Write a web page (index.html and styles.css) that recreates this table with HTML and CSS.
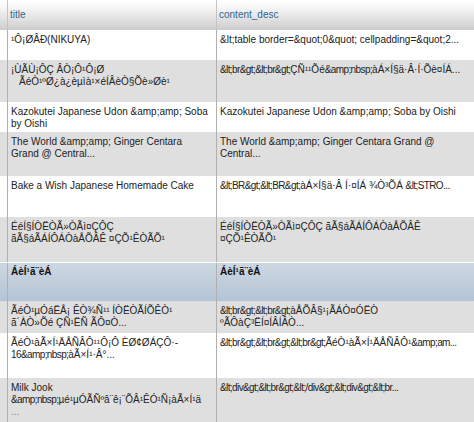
FILE: index.html
```
<!DOCTYPE html>
<html>
<head>
<meta charset="utf-8">
<link rel="stylesheet" href="styles.css">
</head>
<body>
<div class="tbl">
  <div class="row head">
    <div class="c0"></div>
    <div class="c1"><span class="lnk">title</span></div>
    <div class="c2"><span class="lnk">content_desc</span></div>
  </div>
  <div class="row odd h30">
    <div class="c0"></div>
    <div class="c1">¹Ô¡ØÂÐ(NIKUYA)</div>
    <div class="c2">&amp;lt;table border=&amp;quot;0&amp;quot; cellpadding=&amp;quot;2...</div>
  </div>
  <div class="row even h42">
    <div class="c0"></div>
    <div class="c1">¡ÙÃÙ¡ÔÇ ÂÒ¡Ô¹Ô¡Ø<br><span class="indent">ÃéÒ¹ºØ¿à¿èµìà¹×éÍÂèÒ§Õè»Øè¹</span></div>
    <div class="c2"><span class="ent">&amp;lt;br&amp;gt;&amp;lt;br&amp;gt;</span>ÇÑ¹¹Õé<span class="ent">&amp;amp;nbsp;</span>àÁ×Í§ä·Â·Í·Õè¤ÍÁ...</div>
  </div>
  <div class="row odd h30">
    <div class="c0"></div>
    <div class="c1">Kazokutei Japanese Udon &amp;amp;amp; Soba<br>by Oishi</div>
    <div class="c2">Kazokutei Japanese Udon &amp;amp;amp; Soba by Oishi</div>
  </div>
  <div class="row even h44">
    <div class="c0"></div>
    <div class="c1">The World &amp;amp;amp; Ginger Centara<br>Grand @ Central...</div>
    <div class="c2">The World &amp;amp;amp; Ginger Centara Grand @<br>Central...</div>
  </div>
  <div class="row odd h41">
    <div class="c0"></div>
    <div class="c1">Bake a Wish Japanese Homemade Cake</div>
    <div class="c2"><span class="ent">&amp;lt;BR&amp;gt;&amp;lt;BR&amp;gt;</span>àÁ×Í§ä·Â Í·¤ÍÁ ¾Ò³ÕÁ <span class="ent">&amp;lt;STRO...</span></div>
  </div>
  <div class="row even h45">
    <div class="c0"></div>
    <div class="c1">ÉéÍ§ÍÒËÒÃ»ÒÃì¤ÇÔÇ<br>ãÃ§áÃÁÍÔÁÒàÅÕÂÊ ¤ÇÕ¹ÊÒÃÕ¹</div>
    <div class="c2">ÉéÍ§ÍÒËÒÃ»ÒÃì¤ÇÔÇ ãÃ§áÃÁÍÔÁÒàÅÕÂÊ<br>¤ÇÕ¹ÊÒÃÕ¹</div>
  </div>
  <div class="row marked h39">
    <div class="c0"></div>
    <div class="c1">ÁèÍ¹ã¨èÁ</div>
    <div class="c2">ÁèÍ¹ã¨èÁ</div>
  </div>
  <div class="row even h32">
    <div class="c0"></div>
    <div class="c1">ÃéÒ¹µÓáËÅ¡ ÊÒ¾Ñ¹¹ ÍÒËÒÃÍÕÊÒ¹<br>ã´ÀÒ»Õé ÇÑ¹ËÑ ÃÔ¤Ò...</div>
    <div class="c2"><span class="ent">&amp;lt;br&amp;gt;&amp;lt;br&amp;gt;</span>àÅÕÂ§¹¡ÃÁÒ¤ÓËÒ<br>ºÃÔàÇ³ËÍ¤ÍÂÍÂÒ...</div>
  </div>
  <div class="row odd h45">
    <div class="c0"></div>
    <div class="c1">ÃéÒ¹àÃ×Í¹ÄÅÑÂÔ¹¹Ô¡Ô ÈØ¢ØÁÇÔ·-<br><span class="ent">16&amp;amp;nbsp;</span>àÃ×Í¹·Â°...</div>
    <div class="c2"><span class="ent">&amp;lt;br&amp;gt;&amp;lt;br&amp;gt;&amp;lt;br&amp;gt;</span>ÃéÒ¹àÃ×Í¹ÄÅÑÂÔ¹<span class="ent">&amp;amp;am...</span></div>
  </div>
  <div class="row even h44">
    <div class="c0"></div>
    <div class="c1">Milk Jook<br><span class="ent">&amp;amp;nbsp;</span>µé¹µÓÃÑºâ¨ê¡¨ÕÂ¹ÊÓ¹Ñ¡àÃ×Í¹ä<br><span class="dots">...</span></div>
    <div class="c2"><span class="ent">&amp;lt;div&amp;gt;&amp;lt;br&amp;gt;&amp;lt;/div&amp;gt;&amp;lt;div&amp;gt;&amp;lt;br...</span></div>
  </div>
</div>
</body>
</html>
```
FILE: styles.css
```
html, body {
  margin: 0;
  padding: 0;
  background: #fff;
  overflow: hidden;
}
body {
  font-family: "Liberation Sans", Arial, sans-serif;
  font-size: 10px;
  line-height: 12px;
  color: #222;
}
.tbl {
  width: 760px;
}
.row {
  display: flex;
  box-sizing: border-box;
}
.c0 {
  flex: none;
  width: 7px;
}
.c1, .c2 {
  flex: none;
  box-sizing: border-box;
  border-left: 1px solid #b0b0b0;
  padding: 4px 3px 0 3px;
  white-space: nowrap;
  overflow: hidden;
}
.c1 {
  width: 209px;
}
.c2 {
  width: 544px;
}
.head {
  height: 30px;
  background: linear-gradient(#ffffff 0%, #f6f6f6 25%, #cdcdcd 100%);
}
.head .c1, .head .c2 {
  padding-top: 9px;
  padding-left: 2px;
  border-left-color: #c4c4c4;
}
.lnk {
  color: #2f6690;
}
.odd {
  background: #fff;
}
.even {
  background: #dfdfdf;
}
.marked {
  background: linear-gradient(#cdd7e1, #b3c4d5);
  border-top: 1px solid #fff;
  font-weight: bold;
  color: #111;
}
.marked .c1, .marked .c2 {
  padding-top: 3px;
}
.ent {
  letter-spacing: -0.6px;
}
.indent {
  padding-left: 8px;
}
.dots {
  color: #888;
}
.h30 { height: 30px; }
.h32 { height: 32px; }
.h39 { height: 39px; }
.h41 { height: 41px; }
.h42 { height: 42px; }
.h44 { height: 44px; }
.h45 { height: 45px; }
```
